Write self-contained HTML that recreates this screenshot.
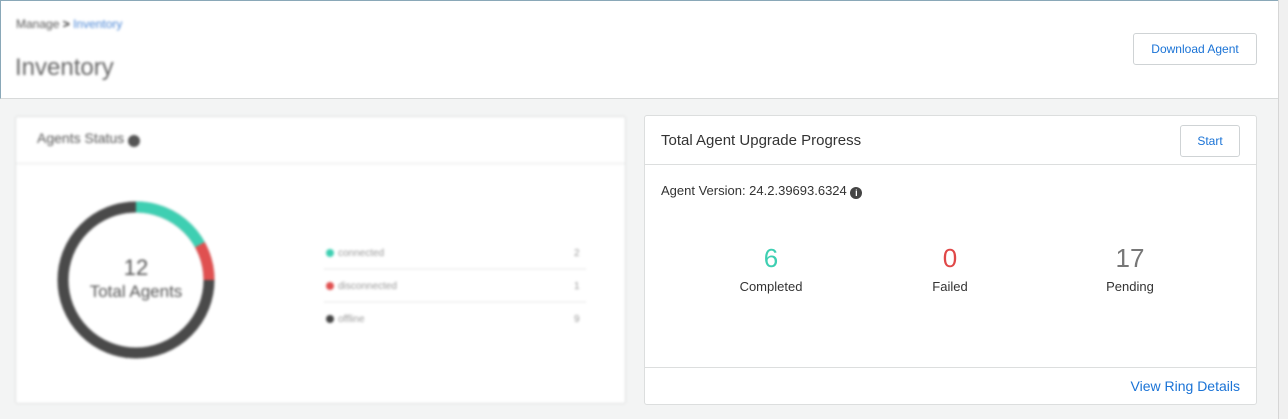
<!DOCTYPE html>
<html><head><meta charset="utf-8"><style>
*{box-sizing:border-box;margin:0;padding:0}
body{width:1288px;height:419px;overflow:hidden;background:#f3f4f4;font-family:"Liberation Sans",sans-serif;position:relative}
.top{position:absolute;left:0;top:0;width:1278px;height:99px;background:#fff;border-top:1px solid #8aa8b8;border-left:1px solid #8aa8b8;border-bottom:1px solid #d8dada}
.sb{position:absolute;right:0;top:0;width:10px;height:419px;background:#f0f0f0;border-left:1px solid #d6d6d6}
.blur{filter:blur(1.3px)}
.card{position:absolute;background:#fff;border:1px solid #dcdede;border-radius:3px}
.btn{position:absolute;border:1px solid #cfd3d5;border-radius:3px;background:#fff;color:#1a73d6;font-size:12px;text-align:center}
</style></head><body>
<div class="top">
 <div class="blur" style="position:absolute;left:15px;top:16px;font-size:12px;color:#555">Manage <b style="color:#333">&gt;</b> <span style="color:#4d88d6">Inventory</span></div>
 <div class="blur" style="position:absolute;left:14px;top:53px;font-size:24px;color:#666">Inventory</div>
 <div class="btn" style="left:1132px;top:32px;width:124px;height:32px;line-height:30px">Download Agent</div>
</div>
<div class="sb"></div>
<div class="card blur" style="left:15px;top:116px;width:611px;height:288px">
 <div style="height:47px;border-bottom:1px solid #e6e6e6;padding:13px 0 0 21px;font-size:14px;color:#555">Agents Status <span style="display:inline-block;width:12px;height:12px;border-radius:50%;background:#555;vertical-align:-4px"></span></div>
 <svg style="position:absolute;left:0;top:0" width="611" height="288">
  <g transform="translate(120,163)">
   <circle r="73" fill="none" stroke="#4a4a4a" stroke-width="11"/>
   <circle r="73" fill="none" stroke="#3ecfb2" stroke-width="11" stroke-dasharray="78 500" transform="rotate(-90)"/>
   <circle r="73" fill="none" stroke="#e05050" stroke-width="11" stroke-dasharray="37 500" transform="rotate(-29)"/>
   <text y="-5" text-anchor="middle" font-size="22" fill="#555" font-family="Liberation Sans">12</text>
   <text y="17" text-anchor="middle" font-size="17" fill="#555" font-family="Liberation Sans">Total Agents</text>
  </g>
  <g font-size="10" fill="#999" font-family="Liberation Sans">
   <circle cx="314" cy="136" r="4" fill="#3ecfb2"/><text x="322" y="139">connected</text><text x="558" y="139">2</text>
   <line x1="308" x2="570" y1="152" y2="152" stroke="#e4e4e4"/>
   <circle cx="314" cy="169" r="4" fill="#e05050"/><text x="322" y="172">disconnected</text><text x="558" y="172">1</text>
   <line x1="308" x2="570" y1="185" y2="185" stroke="#e4e4e4"/>
   <circle cx="314" cy="202" r="4" fill="#444"/><text x="322" y="205">offline</text><text x="558" y="205">9</text>
  </g>
 </svg>
</div>
<div class="card" style="left:644px;top:115px;width:613px;height:290px">
 <div style="height:49px;border-bottom:1px solid #dcdede;position:relative">
  <div style="position:absolute;left:16px;top:16px;font-size:15px;color:#333">Total Agent Upgrade Progress</div>
  <div class="btn" style="left:535px;top:9px;width:60px;height:32px;line-height:30px">Start</div>
 </div>
 <div style="position:absolute;left:16px;top:67px;font-size:13px;color:#333">Agent Version: 24.2.39693.6324 <span style="display:inline-block;width:12px;height:12px;border-radius:50%;background:#444;color:#fff;font-size:9px;line-height:12px;text-align:center;font-weight:bold;vertical-align:-1px">i</span></div>
 <div style="position:absolute;left:76px;top:127px;width:100px;text-align:center"><div style="font-size:26px;color:#3ecfb2">6</div><div style="font-size:13px;color:#333;margin-top:5px">Completed</div></div>
 <div style="position:absolute;left:255px;top:127px;width:100px;text-align:center"><div style="font-size:26px;color:#e04848">0</div><div style="font-size:13px;color:#333;margin-top:5px">Failed</div></div>
 <div style="position:absolute;left:435px;top:127px;width:100px;text-align:center"><div style="font-size:26px;color:#777">17</div><div style="font-size:13px;color:#333;margin-top:5px">Pending</div></div>
 <div style="position:absolute;left:0;top:251px;width:611px;border-top:1px solid #dcdede"></div>
 <div style="position:absolute;right:16px;top:262px;font-size:14px;color:#1a73d6">View Ring Details</div>
</div>
</body></html>
